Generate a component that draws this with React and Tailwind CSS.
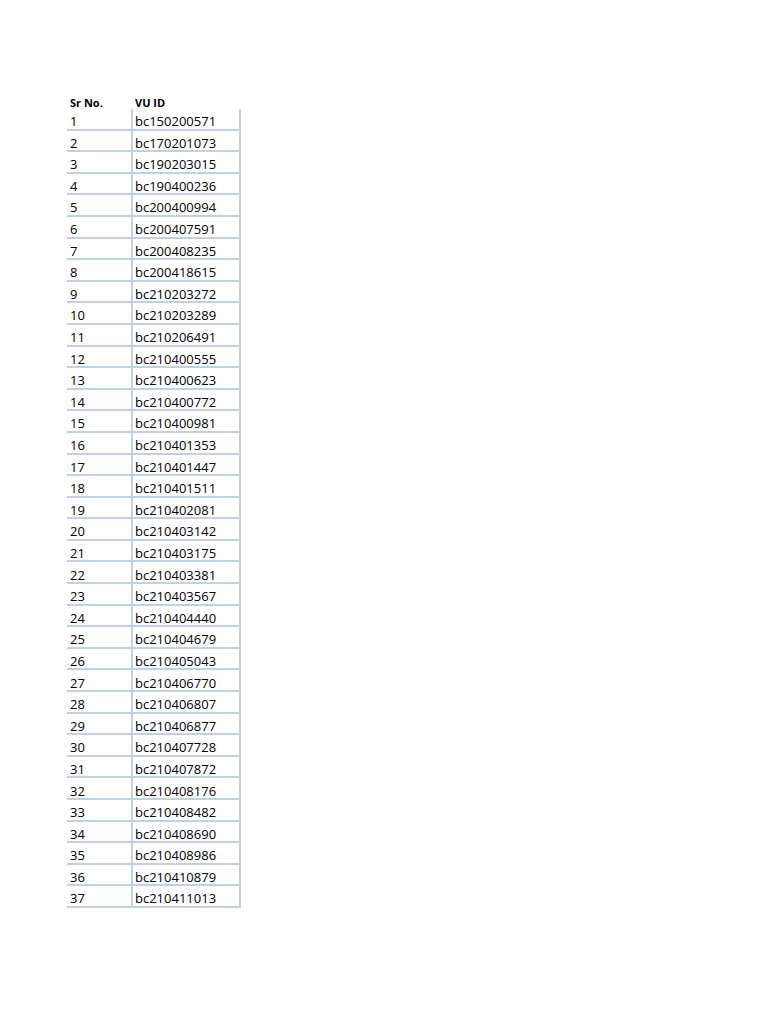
const ids = [
  'bc150200571', 'bc170201073', 'bc190203015', 'bc190400236', 'bc200400994',
  'bc200407591', 'bc200408235', 'bc200418615', 'bc210203272', 'bc210203289',
  'bc210206491', 'bc210400555', 'bc210400623', 'bc210400772', 'bc210400981',
  'bc210401353', 'bc210401447', 'bc210401511', 'bc210402081', 'bc210403142',
  'bc210403175', 'bc210403381', 'bc210403567', 'bc210404440', 'bc210404679',
  'bc210405043', 'bc210406770', 'bc210406807', 'bc210406877', 'bc210407728',
  'bc210407872', 'bc210408176', 'bc210408482', 'bc210408690', 'bc210408986',
  'bc210410879', 'bc210411013',
]

export default function App() {
  return (
    <div
      className="min-h-screen w-[768px] bg-white pt-[93px] pl-[67px] text-black"
      style={{ fontFamily: '"Open Sans", "Liberation Sans", sans-serif' }}
    >
      {/* header */}
      <div className="flex h-[16px] items-end pb-[1px] text-[11px] font-bold leading-none">
        <div className="w-[66px] pl-[3px]">Sr No.</div>
        <div className="pl-[2px]">VU ID</div>
      </div>

      {/* rows */}
      <div className="w-[174px]">
        {ids.map((id, i) => (
          <div key={id} className="flex h-[21.6px] border-b-2 border-[#bfd1e9] text-[13px] font-medium leading-none">
            <div className="flex w-[66px] items-end border-r-2 border-[#bfd1e9] pb-[0.5px] pl-[3px]">{i + 1}</div>
            <div className="flex w-[108px] items-end border-r-2 border-[#bfd1e9] pb-[0.5px] pl-[2px]">{id}</div>
          </div>
        ))}
      </div>
    </div>
  )
}
